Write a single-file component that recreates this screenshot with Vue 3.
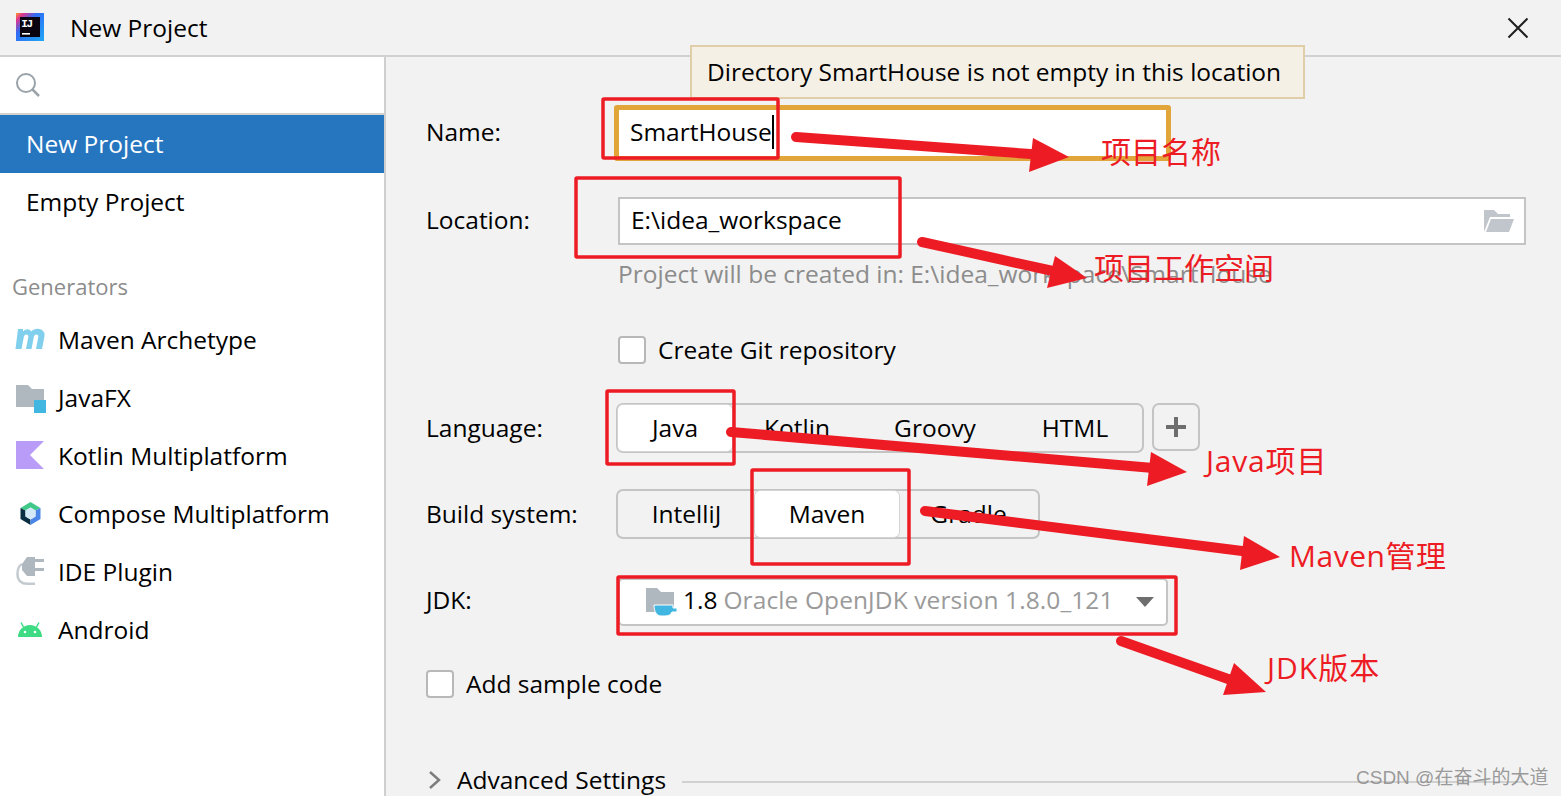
<script setup>
const generators = [
  { id: 'maven', label: 'Maven Archetype' },
  { id: 'javafx', label: 'JavaFX' },
  { id: 'kotlin', label: 'Kotlin Multiplatform' },
  { id: 'compose', label: 'Compose Multiplatform' },
  { id: 'plugin', label: 'IDE Plugin' },
  { id: 'android', label: 'Android' }
]
const languages = ['Java', 'Kotlin', 'Groovy', 'HTML']
const builds = ['IntelliJ', 'Maven', 'Gradle']
const boxes = [
  [603, 99, 175, 59],
  [576, 178, 324, 79],
  [607, 391, 127, 73],
  [752, 470, 157, 94],
  [618, 577, 558, 57]
]
const arrows = [
  { shaft: 'M796 137 L1045 155', head: '1033,138 1069,157 1029,172' },
  { shaft: 'M922 242 L1062 273', head: '1055,256 1087,278 1047,288' },
  { shaft: 'M731 432 L1165 469', head: '1151,452 1187,472 1147,486' },
  { shaft: 'M925 511 L1258 553', head: '1244,536 1280,557 1240,570' },
  { shaft: 'M1121 641 L1245 685', head: '1234,663 1266,692 1223,695' }
]
const notes = [
  { text: '项目名称', x: 1101, y: 132, gap: 0 },
  { text: '项目工作空间', x: 1094, y: 248, gap: 0 },
  { text: 'Java项目', x: 1206, y: 441, gap: 0.8 },
  { text: 'Maven管理', x: 1289, y: 536, gap: 0.5 },
  { text: 'JDK版本', x: 1267, y: 648, gap: 1 }
]
</script>

<template>
  <div class="dialog">
    <header class="titlebar">
      <svg class="logo" width="28" height="28" viewBox="0 0 28 28">
        <defs>
          <linearGradient id="ij" x1="0" y1="0" x2="1" y2="1">
            <stop offset="0" stop-color="#ff9a2b" />
            <stop offset="0.14" stop-color="#e0348c" />
            <stop offset="0.38" stop-color="#2f6cf5" />
            <stop offset="1" stop-color="#1fa8f5" />
          </linearGradient>
        </defs>
        <rect width="28" height="28" fill="url(#ij)" />
        <rect x="4" y="4" width="20" height="20" fill="#0a0410" />
        <rect x="6" y="20" width="8" height="1.6" fill="#fff" />
        <text x="5.3" y="14" class="logo-text">IJ</text>
      </svg>
      <span class="title">New Project</span>
      <svg class="close" width="22" height="22" viewBox="0 0 22 22">
        <path d="M1.500 1.500 L20.500 20.500 M20.500 1.500 L1.500 20.500" stroke="#1f1f1f" stroke-width="2" fill="none" />
      </svg>
    </header>

    <div class="body">
      <aside class="sidebar">
        <div class="search">
          <svg width="26" height="26" viewBox="0 0 26 26">
            <circle cx="11" cy="11" r="9" fill="none" stroke="#9aa3a9" stroke-width="2" />
            <path d="M17.500 17.500 L24 24" stroke="#9aa3a9" stroke-width="2.500" fill="none" />
          </svg>
        </div>
        <div class="item selected">New Project</div>
        <div class="item">Empty Project</div>
        <div class="section">Generators</div>
        <div v-for="g in generators" :key="g.id" class="gen">
          <svg class="gen-icon" width="32" height="32" viewBox="0 0 32 32">
            <path v-if="g.id === 'maven'" d="M3 5 H8 L8 7.500 C11 4.500 14.500 4.500 16 7.500 C19 4.500 23 4 26 5.500 C29 7 30 9.500 29.500 12 L27 25 H21 L23.300 13 C23.800 10 20.500 9.500 19 12 L16.500 25 H11 L13.300 13 C13.800 10 10.500 9.500 9 12 L6.500 25 H0.500 Z" fill="#80cfec" />
            <template v-else-if="g.id === 'javafx'">
              <path d="M1 3 H13 L17 7 H29 V25 H1 Z" fill="#afb8bf" />
              <rect x="19" y="18" width="12" height="13" fill="#40b6e0" />
            </template>
            <path v-else-if="g.id === 'kotlin'" d="M1 1 H29 L15 15 L29 29 H1 Z" fill="#b99bf8" />
            <template v-else-if="g.id === 'compose'">
              <path d="M15.500 4 L25.500 10 L20.500 12.500 L15.500 9.500 L10.500 12.500 L5.500 10 Z" fill="#41c98a" />
              <path d="M5.500 10 L10.500 12.500 V18.500 L15.500 21.500 V27 L5.500 21 Z" fill="#0b2f42" />
              <path d="M25.500 10 L20.500 12.500 V18.500 L15.500 21.500 V27 L25.500 21 Z" fill="#4a86e8" />
              <path d="M15.500 9.500 L20.500 12.500 V18.500 L15.500 21.500 L10.500 18.500 V12.500 Z" fill="#d3e9f7" />
            </template>
            <template v-else-if="g.id === 'plugin'">
              <path d="M7 8 L12 1 H20 V20 H12 L7 14 Z" fill="#afb8bf" />
              <rect x="20" y="3" width="9" height="3" fill="#afb8bf" />
              <rect x="20" y="12" width="9" height="3" fill="#afb8bf" />
              <path d="M7 8 C3 10 2.500 14 2.500 18 C2.500 25 7 27.800 12 27.800 H20" fill="none" stroke="#c4cbd0" stroke-width="2.500" />
            </template>
            <template v-else>
              <path d="M3 23 A12 12 0 0 1 27 23 Z" fill="#3ddc84" />
              <path d="M8.500 13 L6 8.500 M21.500 13 L24 8.500" stroke="#3ddc84" stroke-width="1.500" fill="none" />
              <circle cx="10" cy="18" r="1.300" fill="#fff" />
              <circle cx="20" cy="18" r="1.300" fill="#fff" />
            </template>
          </svg>
          <span>{{ g.label }}</span>
        </div>
      </aside>

      <main class="form">
        <div class="row name-row">
          <span>Name:</span>
          <div class="name-field">SmartHouse<i class="caret"></i></div>
        </div>
        <div class="row location-row">
          <span>Location:</span>
          <div class="location-field">
            <span>E:\idea_workspace</span>
            <svg width="30" height="22" viewBox="0 0 30 22">
              <path d="M0 0 H10 L14 4 H26 V7 H6 L0 22 Z" fill="#c0c6cb" />
              <path d="M7 9 H30 L25 22 H2 Z" fill="#c0c6cb" />
            </svg>
          </div>
        </div>
        <div class="hint">Project will be created in: E:\idea_workspace\SmartHouse</div>
        <label class="check git"><i class="box"></i>Create Git repository</label>
        <div class="row lang-row">
          <span>Language:</span>
          <div class="lang-wrap">
            <div class="seg seg-lang">
              <span v-for="l in languages" :key="l" :class="{ on: l === 'Java' }">{{ l }}</span>
            </div>
            <div class="plus">
              <svg width="22" height="22" viewBox="0 0 22 22">
                <path d="M11 1 V21 M1 11 H21" stroke="#6e6e6e" stroke-width="4" fill="none" />
              </svg>
            </div>
          </div>
        </div>
        <div class="row build-row">
          <span>Build system:</span>
          <div class="seg seg-build">
            <span v-for="b in builds" :key="b" :class="{ on: b === 'Maven' }">{{ b }}</span>
          </div>
        </div>
        <div class="row jdk-row">
          <span>JDK:</span>
          <div class="combo">
            <svg width="32" height="30" viewBox="0 0 32 30">
              <path d="M0 1 H11 L15 5 H28 V25 H0 Z" fill="#afb8bf" />
              <path d="M8 18 H27 V21 H31 V25 H26 C25 28 22 29 19 29 H15 C11 29 8 25 8 18 Z" fill="#40b6e0" stroke="#fff" stroke-width="1" />
            </svg>
            <span class="ver">1.8</span>
            <span class="desc">Oracle OpenJDK version 1.8.0_121</span>
            <i class="tri"></i>
          </div>
        </div>
        <label class="check sample"><i class="box"></i>Add sample code</label>
        <div class="advanced">
          <svg width="14" height="20" viewBox="0 0 14 20">
            <path d="M2 2 L11 10 L2 18" stroke="#7d7d7d" stroke-width="2.500" fill="none" />
          </svg>
          <span>Advanced Settings</span>
          <i class="rule"></i>
        </div>
      </main>
    </div>

    <div class="tooltip">Directory SmartHouse is not empty in this location</div>

    <svg class="marks" width="1561" height="796" viewBox="0 0 1561 796">
      <rect v-for="(b, i) in boxes" :key="i" :x="b[0]" :y="b[1]" :width="b[2]" :height="b[3]" rx="1" fill="none" stroke="#ed1c24" stroke-width="3.500" />
      <g v-for="(a, i) in arrows" :key="i">
        <path :d="a.shaft" stroke="#ed1c24" stroke-width="10" stroke-linecap="round" fill="none" />
        <polygon :points="a.head" fill="#ed1c24" />
      </g>
    </svg>
    <span v-for="n in notes" :key="n.text" class="note" :style="{ left: n.x + 'px', top: n.y + 'px', letterSpacing: n.gap + 'px' }">{{ n.text }}</span>
    <span class="watermark">CSDN @在奋斗的大道</span>
  </div>
</template>

<style scoped>
.dialog {
  position: relative;
  width: 1561px;
  height: 796px;
  overflow: hidden;
  display: flex;
  flex-direction: column;
  background: #f2f2f2;
  color: #000;
  font-family: "Open Sans", "Noto Sans CJK SC", sans-serif;
  font-size: 24.5px;
  line-height: 28px;
}
.titlebar {
  height: 55px;
  flex: none;
  display: flex;
  align-items: center;
  padding: 0 32px 0 16px;
  border-bottom: 2px solid #d1d1d1;
}
.logo { display: block; margin-top: -1px; }
.logo-text {
  font-family: "Liberation Mono", monospace;
  font-size: 11px;
  font-weight: 700;
  fill: #fff;
  letter-spacing: -1.5px;
}
.title { margin-left: 26px; }
.close { margin-left: auto; }
.body { flex: 1; display: flex; min-height: 0; }
.sidebar {
  width: 384px;
  flex: none;
  background: #fff;
  border-right: 2px solid #cfcfcf;
}
.search {
  height: 56px;
  display: flex;
  align-items: center;
  padding-left: 15px;
  border-bottom: 2px solid #d1d1d1;
}
.item {
  height: 58px;
  display: flex;
  align-items: center;
  padding-left: 26px;
}
.selected { background: #2675bf; color: #fff; }
.section {
  height: 80px;
  box-sizing: border-box;
  padding: 41px 0 0 12px;
  color: #8c8c8c;
  font-size: 22px;
}
.gen {
  height: 58px;
  display: flex;
  align-items: center;
  padding-left: 15px;
}
.gen-icon { flex: none; margin-right: 11px; }
.form {
  flex: 1;
  min-width: 0;
  box-sizing: border-box;
  padding: 48px 35px 0 40px;
}
.row {
  display: grid;
  grid-template-columns: 192px 1fr;
  align-items: center;
}
.name-row { height: 56px; }
.name-row > span, .location-row > span { padding-bottom: 2px; }
.name-field {
  box-sizing: border-box;
  width: 557px;
  height: 56px;
  margin-left: -4px;
  padding: 0 0 2px 11px;
  display: flex;
  align-items: center;
  background: #fff;
  border: 5px solid #e2a53a;
  border-radius: 3px;
}
.caret {
  width: 2px;
  height: 34px;
  background: #000;
}
.location-row { height: 48px; margin-top: 36px; }
.location-field {
  box-sizing: border-box;
  height: 48px;
  padding: 0 10px 2px 11px;
  display: flex;
  align-items: center;
  justify-content: space-between;
  background: #fff;
  border: 2px solid #c4c4c4;
}
.location-field svg { margin-top: 2px; }
.hint {
  margin: 17px 0 0 192px;
  height: 24px;
  line-height: 24px;
  color: #8c8c8c;
  white-space: nowrap;
}
.check {
  display: flex;
  align-items: center;
  height: 28px;
}
.box {
  box-sizing: border-box;
  width: 28px;
  height: 28px;
  margin-right: 12px;
  background: #fff;
  border: 2px solid #b8b8b8;
  border-radius: 4px;
}
.git { margin: 50px 0 0 192px; }
.lang-row { height: 50px; margin-top: 39px; }
.lang-wrap { display: flex; align-items: flex-start; gap: 8px; margin-left: -2px; }
.seg {
  box-sizing: border-box;
  height: 50px;
  display: grid;
  background: #f2f2f2;
  border: 2px solid #c4c4c4;
  border-radius: 7px;
}
.seg span {
  display: flex;
  align-items: center;
  justify-content: center;
}
.seg .on {
  background: #fff;
  border-radius: 5px;
  box-shadow: 0 0 0 1px #d4d4d4;
}
.seg-lang { width: 528px; grid-template-columns: 114px 130px 146px 134px; }
.seg-build { width: 424px; margin-left: -2px; grid-template-columns: 137px 144px 139px; }
.plus {
  box-sizing: border-box;
  width: 48px;
  height: 48px;
  display: flex;
  align-items: center;
  justify-content: center;
  border: 2px solid #c4c4c4;
  border-radius: 7px;
}
.build-row { height: 50px; margin-top: 36px; }
.jdk-row { height: 48px; margin-top: 39px; }
.jdk-row > span { padding-bottom: 5px; }
.combo {
  box-sizing: border-box;
  width: 550px;
  height: 48px;
  padding: 0 0 5px 26px;
  display: flex;
  align-items: center;
  background: #fff;
  border: 2px solid #c4c4c4;
  border-radius: 5px;
}
.combo svg { margin-top: 5px; }
.ver { margin-left: 5px; }
.desc { margin-left: 6px; color: #9a9a9a; white-space: nowrap; letter-spacing: 0.1px; }
.tri {
  margin-left: auto;
  margin-right: 12px;
  margin-top: 5px;
  width: 0;
  height: 0;
  border-left: 9px solid transparent;
  border-right: 9px solid transparent;
  border-top: 10px solid #6e6e6e;
}
.sample { margin-top: 44px; }
.advanced {
  margin-top: 70px;
  height: 24px;
  display: flex;
  align-items: center;
  white-space: nowrap;
}
.advanced svg { flex: none; margin: 0 15px 0 2px; }
.rule { flex: 1; height: 2px; margin: 3px 0 0 16px; background: #d1d1d1; }
.tooltip {
  position: absolute;
  left: 690px;
  top: 45px;
  box-sizing: border-box;
  width: 615px;
  height: 54px;
  padding-left: 15px;
  display: flex;
  align-items: center;
  background: #f5f0e6;
  border: 2px solid #e0cea8;
  white-space: nowrap;
}
.marks { position: absolute; left: 0; top: 0; pointer-events: none; }
.note {
  position: absolute;
  color: #ed1c24;
  font-family: "Open Sans", "Noto Sans CJK SC", sans-serif;
  font-size: 30px;
  line-height: 40px;
  white-space: nowrap;
}
.watermark {
  position: absolute;
  left: 1356px;
  top: 764px;
  color: rgba(130, 130, 130, 0.8);
  font-family: "Liberation Sans", "Noto Sans CJK SC", sans-serif;
  font-size: 19px;
  white-space: nowrap;
}
</style>

<style>
html, body { margin: 0; overflow: hidden; }
</style>
